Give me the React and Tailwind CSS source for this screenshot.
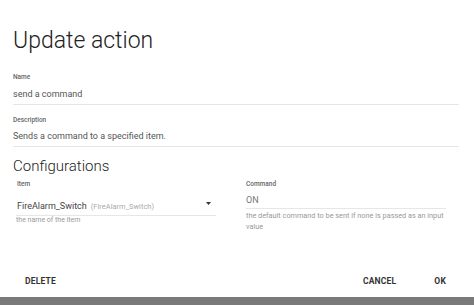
import React from "react";

const Field = ({ label, value }) => (
  <div className="pr-[15px]">
    <div className="text-[6.5px] font-medium text-[#666] leading-none">{label}</div>
    <div className="mt-[9px] text-[9px] text-[#555] leading-none pb-[5px] border-b border-[#e6e6e6]">
      {value}
    </div>
  </div>
);

const App = () => (
  <div className="w-[474px] h-[305px] bg-[#7a7a7a] font-['Roboto',sans-serif] overflow-hidden">
    <div className="h-[297px] bg-white flex flex-col">
      <div className="pl-[13px] pt-[29px]">
        <h1 className="text-[23px] font-light text-[#222] leading-none">
          Update action
        </h1>
        <div className="mt-[22px] flex flex-col gap-[12px]">
          <Field label="Name" value="send a command" />
          <Field label="Description" value="Sends a command to a specified item." />
        </div>
        <h2 className="mt-[12px] text-[15px] font-light text-[#222] leading-none">Configurations</h2>
      </div>
      <div className="mt-[7px] grid grid-cols-2 gap-[30px] pl-[16px] pr-[28px]">
        <div>
          <div className="pl-[1px] text-[6.5px] font-medium text-[#666] leading-none">Item</div>
          <div className="mt-[8px] flex items-center justify-between pl-[1px] pr-[5px] pb-[3px] border-b border-[#e6e6e6]">
            <div className="leading-none">
              <span className="text-[9px] text-[#444]">FireAlarm_Switch</span>{" "}
              <span className="text-[7.5px] text-[#aaa]">(FireAlarm_Switch)</span>
            </div>
            <svg width="5" height="3" viewBox="0 0 5 3">
              <path d="M0 0h5L2.5 3z" fill="#333" />
            </svg>
          </div>
          <div className="mt-[1px] text-[7px] text-[#999] leading-none">the name of the item</div>
        </div>
        <div>
          <div className="text-[6.5px] font-medium text-[#666] leading-none">Command</div>
          <div className="mt-[8px] text-[9px] text-[#777] leading-none pb-[3px] border-b border-[#e6e6e6]">
            ON
          </div>
          <div className="mt-[1px] text-[7.3px] text-[#999] leading-[11px]">
            the default command to be sent if none is passed as an input value
          </div>
        </div>
      </div>
      <div className="mt-auto mb-[12px] flex items-center px-[25px] text-[8.5px] font-bold text-[#333] leading-none tracking-[0.2px]">
        <span>DELETE</span>
        <span className="ml-auto">CANCEL</span>
        <span className="ml-[38px] mr-[3px]">OK</span>
      </div>
    </div>
  </div>
);

export default App;
